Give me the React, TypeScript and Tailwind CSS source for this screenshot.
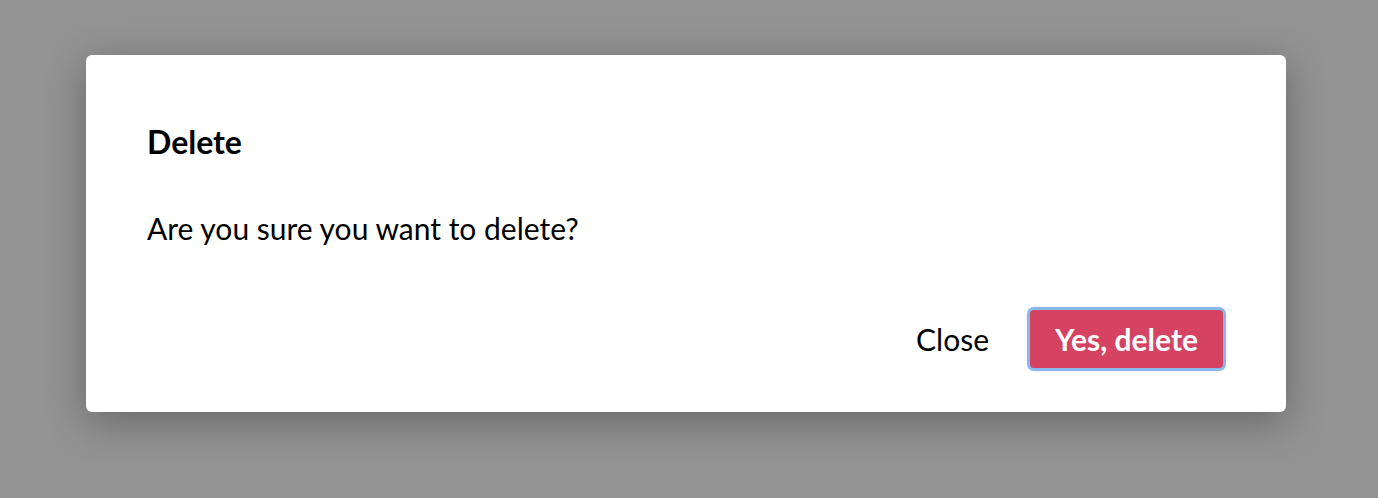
import React from 'react';

export default function App() {
  return (
    <div className="w-full h-[498px] bg-[#939393] pt-[55px] pl-[86px] font-['Lato','Liberation_Sans',sans-serif] text-black">
      <div className="w-[1200px] bg-white rounded-[6px] shadow-[0_10px_40px_rgba(0,0,0,0.3)] px-[63px] pt-[67px] pb-[44px]">
        <h2 className="text-[32px] font-bold leading-[40px] -ml-[2px]">Delete</h2>
        <p className="text-[30px] leading-[40px] mt-[46px] -ml-[2px]">Are you sure you want to delete?</p>
        <div className="flex justify-end items-center gap-[41px] mt-[62px]">
          <button className="text-[30px] leading-[40px] px-0">Close</button>
          <button className="h-[58px] px-[25px] bg-[#d54262] text-white text-[30px] font-bold rounded-[4px] ring-[3px] ring-[#8ab8ec] shadow-[0_0_5px_rgba(80,140,220,0.8)]">
            Yes, delete
          </button>
        </div>
      </div>
    </div>
  );
}
